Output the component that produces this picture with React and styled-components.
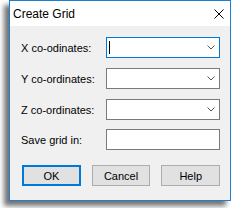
import React from 'react';
import styled, { createGlobalStyle } from 'styled-components';

const GlobalStyle = createGlobalStyle`
  html, body {
    margin: 0;
    padding: 0;
    background: #ffffff;
  }
  body {
    font-family: "Liberation Sans", Arial, sans-serif;
  }
`;

const Page = styled.div`
  width: 235px;
  height: 208px;
  overflow: hidden;
  padding-left: 9px;
  box-sizing: border-box;
`;

const Window = styled.div`
  width: 222px;
  height: 201px;
  box-sizing: border-box;
  border: 1px solid #1c7fd2;
  background: #f0f0f0;
  box-shadow: -5px 5px 5px rgba(0, 0, 0, 0.55);
  display: flex;
  flex-direction: column;
`;

const TitleBar = styled.div`
  height: 25px;
  background: #ffffff;
  display: flex;
  align-items: center;
  justify-content: space-between;
  padding: 0 6px 0 3px;
`;

const Title = styled.span`
  font-size: 12px;
  color: #000;
  margin-top: 1px;
`;

const Close = styled.svg`
  width: 10px;
  height: 10px;
`;

const Body = styled.div`
  flex: 1;
  padding: 11px 10px 0 11px;
  display: flex;
  flex-direction: column;
`;

const Row = styled.div`
  display: grid;
  grid-template-columns: 85px 114px;
  align-items: center;
  height: 21px;
  margin-bottom: ${(p) => p.gap}px;
`;

const Label = styled.span`
  font-size: 11px;
  color: #000;
`;

const Field = styled.div`
  height: 21px;
  box-sizing: border-box;
  border: 1px solid ${(p) => (p.focused ? '#0078d7' : '#7a7a7a')};
  background: #fff;
  display: flex;
  align-items: center;
  justify-content: space-between;
  padding: 0 4px 0 2px;
`;

const Caret = styled.span`
  width: 1px;
  height: 13px;
  background: #000;
`;

const Chevron = styled.svg`
  width: 8px;
  height: 5px;
  margin-left: auto;
`;

const Buttons = styled.div`
  display: flex;
  gap: 11px;
  margin-top: 15px;
  padding-left: 1px;
`;

const Button = styled.div`
  width: 60px;
  height: 21px;
  box-sizing: border-box;
  border: ${(p) => (p.primary ? '2px solid #0078d7' : '1px solid #adadad')};
  background: #e1e1e1;
  display: flex;
  align-items: center;
  justify-content: center;
  font-size: 11px;
  color: #000;
`;

const Combo = ({ focused }) => (
  <Field focused={focused}>
    {focused && <Caret />}
    <Chevron viewBox="0 0 8 5">
      <polyline points="0.5,0.5 4,4 7.5,0.5" fill="none" stroke="#555" strokeWidth="1" />
    </Chevron>
  </Field>
);

export default function App() {
  return (
    <Page>
      <GlobalStyle />
      <Window>
        <TitleBar>
          <Title>Create Grid</Title>
          <Close viewBox="0 0 10 10">
            <path d="M0.5 0.5 L9.5 9.5 M9.5 0.5 L0.5 9.5" stroke="#000" strokeWidth="1" />
          </Close>
        </TitleBar>
        <Body>
          <Row gap={10}>
            <Label>X co-odinates:</Label>
            <Combo focused />
          </Row>
          <Row gap={10}>
            <Label>Y co-ordinates:</Label>
            <Combo />
          </Row>
          <Row gap={9}>
            <Label>Z co-ordinates:</Label>
            <Combo />
          </Row>
          <Row gap={0}>
            <Label>Save grid in:</Label>
            <Field />
          </Row>
          <Buttons>
            <Button primary>OK</Button>
            <Button>Cancel</Button>
            <Button>Help</Button>
          </Buttons>
        </Body>
      </Window>
    </Page>
  );
}
